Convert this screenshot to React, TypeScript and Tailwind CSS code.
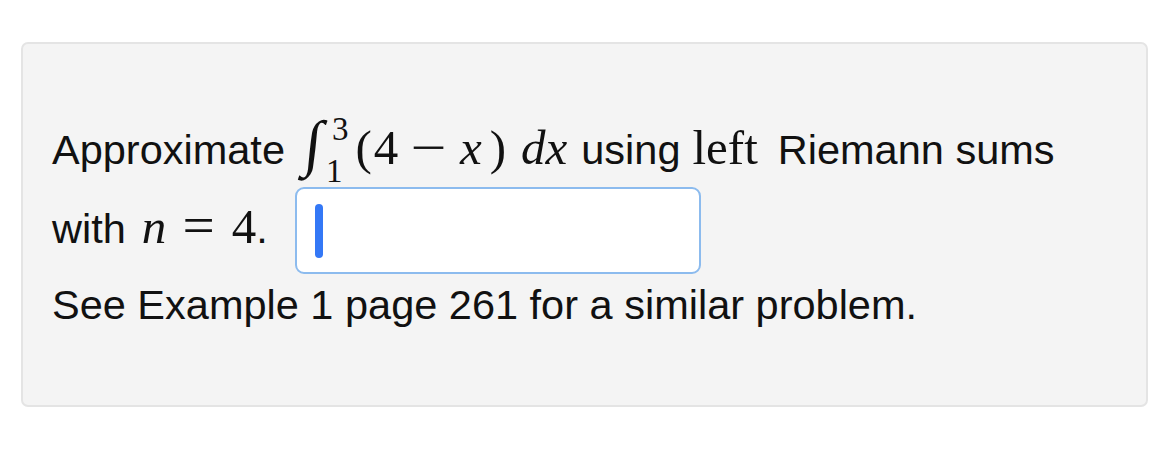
import React from 'react';

const mathFont = "font-['Liberation_Serif',serif]";

function Caret() {
  return <span className="block w-[8px] h-[54px] rounded-full bg-[#3478f6]" />;
}

export default function App() {
  return (
    <div className="min-h-screen bg-white pt-[42px] px-[21px] font-['Liberation_Sans',Arial,sans-serif] text-[#111]">
      <div className="w-[1127px] h-[365px] bg-[#f4f4f4] border-2 border-[#e4e4e4] rounded-[7px] pl-[29px] pt-[80px]">
        {/* Line 1 */}
        <div className="flex items-baseline h-[48px] whitespace-nowrap text-[41.5px] leading-[48px]">
          <span>Approximate</span>
          <span className={`${mathFont} text-[62px] leading-[0] italic ml-[20px] inline-block -skew-x-6`}>∫</span>
          <span className={`${mathFont} self-start -mt-[12px] inline-flex flex-col text-[33px] leading-[34px] gap-[8px] ml-[4px]`}>
            <span className="pl-[6px]">3</span>
            <span>1</span>
          </span>
          <span className={`${mathFont} text-[49px] ml-[7px]`}>(</span>
          <span className={`${mathFont} text-[49px] ml-[2px]`}>4</span>
          <span className={`${mathFont} text-[49px] leading-[0] inline-block scale-x-[1.3] ml-[17px]`}>−</span>
          <span className={`${mathFont} text-[49px] italic ml-[17px]`}>x</span>
          <span className={`${mathFont} text-[49px] ml-[8px]`}>)</span>
          <span className={`${mathFont} text-[49px] italic ml-[15px]`}>dx</span>
          <span className="ml-[14px]">using</span>
          <span className={`${mathFont} text-[49px] ml-[12px]`}>left</span>
          <span className="ml-[20px]">Riemann sums</span>
        </div>

        {/* Line 2 */}
        <div className="flex items-center h-[87px] mt-[15px] whitespace-nowrap text-[41.5px] leading-[48px]">
          <div className="flex items-baseline mb-[6px]">
            <span>with</span>
            <span className={`${mathFont} text-[49px] italic ml-[16px]`}>n</span>
            <span className={`${mathFont} text-[52px] leading-[0] inline-block scale-x-[1.1] ml-[18px]`}>=</span>
            <span className={`${mathFont} text-[49px] ml-[18px]`}>4</span>
            <span>.</span>
          </div>
          <div className="ml-[27px] w-[406px] h-[87px] bg-white border-2 border-[#8cbbee] rounded-[9px] flex items-center pl-[18px]">
            <Caret />
          </div>
        </div>

        {/* Line 3 */}
        <p className="mt-[7px] text-[41.5px] leading-[48px] whitespace-nowrap">
          See Example 1 page 261 for a similar problem.
        </p>
      </div>
    </div>
  );
}
